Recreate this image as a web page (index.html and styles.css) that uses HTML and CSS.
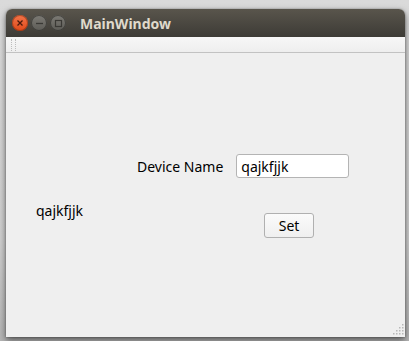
FILE: index.html
```html
<!DOCTYPE html>
<html lang="en">
<head>
  <meta charset="UTF-8">
  <title>MainWindow</title>
  <link rel="stylesheet" href="styles.css">
</head>
<body>
  <div class="window">

    <div class="title-bar">
      <div class="win-buttons">
        <span class="btn-close">
          <svg width="8" height="8" viewBox="0 0 8 8"><path d="M1.5 1.5 L6.5 6.5 M6.5 1.5 L1.5 6.5" stroke="#4a1a0c" stroke-width="1.3"/></svg>
        </span>
        <span class="btn-min">
          <svg width="9" height="9" viewBox="0 0 9 9"><path d="M1 4.5 H8" stroke="#3a3935" stroke-width="1.3"/></svg>
        </span>
        <span class="btn-max">
          <svg width="9" height="9" viewBox="0 0 9 9"><rect x="1.5" y="1.5" width="6" height="6" fill="none" stroke="#3a3935" stroke-width="1.2"/></svg>
        </span>
      </div>
      <span class="title">MainWindow</span>
    </div>

    <div class="toolbar">
      <span class="grip"></span>
    </div>

    <div class="content">
      <div class="form-row">
        <span class="label">Device Name</span>
        <input class="name-input" type="text" value="qajkfjjk">
      </div>

      <div class="bottom-row">
        <span class="js-name">qajkfjjk</span>
        <button class="set-button">Set</button>
      </div>

      <svg class="size-grip" width="12" height="12" viewBox="0 0 12 12">
        <g fill="#b8b8b8">
          <rect x="10" y="1" width="1.5" height="1.5"/>
          <rect x="7" y="4" width="1.5" height="1.5"/>
          <rect x="10" y="4" width="1.5" height="1.5"/>
          <rect x="4" y="7" width="1.5" height="1.5"/>
          <rect x="7" y="7" width="1.5" height="1.5"/>
          <rect x="10" y="7" width="1.5" height="1.5"/>
          <rect x="1" y="10" width="1.5" height="1.5"/>
          <rect x="4" y="10" width="1.5" height="1.5"/>
          <rect x="7" y="10" width="1.5" height="1.5"/>
          <rect x="10" y="10" width="1.5" height="1.5"/>
        </g>
      </svg>
    </div>

  </div>
</body>
</html>
```

FILE: styles.css
```css
body{
  margin: 0;
  padding: 9px 4px 0 6px;
  height: 341px;
  box-sizing: border-box;
  overflow: hidden;
  background: linear-gradient(#dadada, #cfcfcf 70%, #b5b5b5);
  font-family: "Noto Sans", "Open Sans", sans-serif;
}

.window{
  width: 399px;
  height: 328px;
  display: flex;
  flex-direction: column;
  background-color: #efefef;
  border-radius: 6px 6px 0 0;
  box-shadow: 0 3px 7px rgba(0, 0, 0, 0.55), 0 0 2px rgba(0, 0, 0, 0.35);
}

.title-bar{
  height: 28px;
  display: flex;
  align-items: center;
  padding-left: 6px;
  border-radius: 6px 6px 0 0;
  background: linear-gradient(#59554c, #3d3b36);
}

.win-buttons{
  display: flex;
  gap: 3px;
}

.win-buttons span{
  width: 16px;
  height: 16px;
  border-radius: 50%;
  display: flex;
  align-items: center;
  justify-content: center;
}

.btn-close{
  background: linear-gradient(#f2754a, #df4919);
  box-shadow: inset 0 0 0 1px rgba(120, 40, 10, 0.5);
}

.btn-min,
.btn-max{
  background: linear-gradient(#7d7b75, #5c5b56);
  box-shadow: inset 0 0 0 1px rgba(40, 40, 36, 0.6);
}

.title{
  margin-left: 14px;
  color: #dfd9cb;
  font-size: 14px;
  font-weight: bold;
}

.toolbar{
  height: 15px;
  display: flex;
  align-items: center;
  padding-left: 5px;
  background: linear-gradient(#f7f7f7, #eeeeee);
  border-bottom: 1px solid #c2c2c2;
}

.grip{
  width: 3px;
  height: 12px;
  border-left: 1px dotted #bdbdbd;
  border-right: 1px dotted #bdbdbd;
}

.content{
  flex: 1;
  position: relative;
  padding-top: 101px;
  font-size: 14px;
  color: #000;
}

.form-row{
  display: flex;
  align-items: center;
  margin-left: 131px;
  gap: 13px;
}

.name-input{
  width: 113px;
  height: 24px;
  box-sizing: border-box;
  padding: 0 4px;
  border: 1px solid #b4b4b4;
  border-radius: 3px;
  background: #fff;
  font-family: "Noto Sans", "Open Sans", sans-serif;
  font-size: 14px;
  color: #000;
}

.bottom-row{
  display: flex;
  align-items: flex-start;
  margin-top: 35px;
  padding-left: 30px;
}

.js-name{
  margin-top: -12px;
}

.set-button{
  margin-left: 181px;
  width: 50px;
  height: 25px;
  border: 1px solid #b0b0b0;
  border-radius: 3px;
  background: linear-gradient(#fbfbfb, #efefef);
  font-family: "Noto Sans", "Open Sans", sans-serif;
  font-size: 14px;
  padding: 0;
}

.size-grip{
  position: absolute;
  right: 1px;
  bottom: 2px;
}
```
